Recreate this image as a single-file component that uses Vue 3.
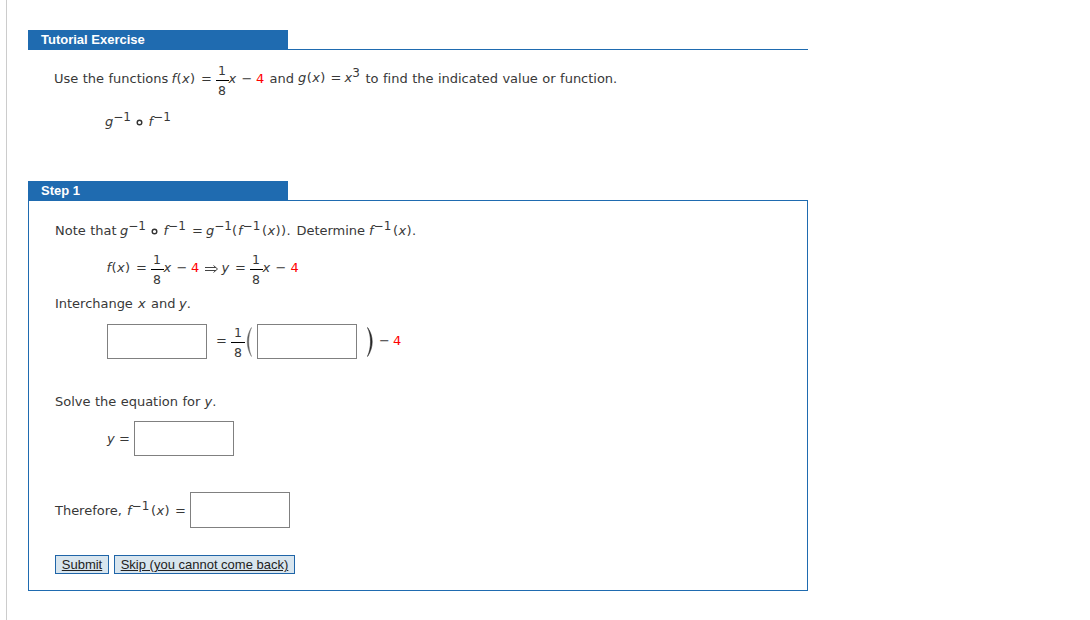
<script setup>
import { h } from 'vue'

const Frac = () => h('span', { class: 'frac' }, [
  h('span', { class: 'num' }, '1'),
  h('span', { class: 'den' }, '8'),
])
const Inv = (props) => h('span', { class: 'inv' }, [h('i', props.name), h('sup', '−1')])
Inv.props = ['name']
const Ring = () => h('svg', { class: 'ring', width: 7, height: 7, viewBox: '0 0 7 7' }, [
  h('circle', { cx: 3.5, cy: 3.5, r: 2.3, fill: 'none', stroke: '#333', 'stroke-width': 1.4 }),
])
</script>

<template>
  <main class="page">
    <section class="exercise">
      <h2 class="tab">Tutorial Exercise</h2>
      <div class="body">
        <div class="row intro">
          <span class="t">Use the functions</span>
          <span class="fn"><i>f</i>(<i>x</i>)</span>
          <span>=</span>
          <Frac />
          <i>x</i>
          <span class="minus">−</span>
          <span class="red">4</span>
          <span>and</span>
          <span class="fn up"><i>g</i>(<i>x</i>)</span>
          <span class="up">=</span>
          <span class="up"><i>x</i><sup class="cube">3</sup></span>
          <span class="t tail">to find the indicated value or function.</span>
        </div>
        <div class="row compose">
          <Inv name="g" />
          <Ring />
          <Inv name="f" class="f" />
        </div>
      </div>
    </section>

    <section class="step">
      <h2 class="tab">Step 1</h2>
      <div class="panel">
        <div class="row note">
          <span class="t">Note that</span>
          <Inv name="g" />
          <Ring />
          <Inv name="f" class="f" />
          <span>=</span>
          <Inv name="g" />
          <span>(</span>
          <Inv name="f" class="f" />
          <span class="fn">(<i>x</i>)).</span>
          <span class="t">Determine</span>
          <Inv name="f" class="f" />
          <span class="fn">(<i>x</i>).</span>
        </div>
        <div class="row equation">
          <span class="fn"><i>f</i>(<i>x</i>)</span>
          <span>=</span>
          <Frac />
          <i>x</i>
          <span class="minus">−</span>
          <span class="red">4</span>
          <svg class="implies" width="14" height="9" viewBox="0 0 14 9"><path d="M0 3.500H11M0 6.500H11M8.500 1.500L12.500 5L8.500 8.500" fill="none" stroke="#444" stroke-width="1" /></svg>
          <i>y</i>
          <span>=</span>
          <Frac />
          <i>x</i>
          <span class="minus">−</span>
          <span class="red">4</span>
        </div>
        <div class="row swap">
          <span class="t">Interchange</span><i>x</i><span>and</span><span><i>y</i>.</span>
        </div>
        <div class="row blanks">
          <input class="blank" type="text" />
          <span>=</span>
          <Frac class="wide" />
          <svg class="paren" width="7" height="30" viewBox="0 0 7 30"><path d="M5.500 .5C-.2 9 -.2 20.500 5.500 29.500C1.800 20.500 1.800 9 5.500 .5Z" fill="#555" stroke="#777" stroke-width=".5" /></svg>
          <input class="blank" type="text" />
          <svg class="paren" width="7" height="30" viewBox="0 0 7 30"><path d="M.5 .5C6.800 9 6.800 20.500 .5 29.500C4.500 20.500 4.500 9 .5 .5Z" fill="#222" stroke="#333" stroke-width=".6" /></svg>
          <span class="minus">−</span>
          <span class="red">4</span>
        </div>
        <div class="row solve">
          <span class="t">Solve the equation for</span><span><i>y</i>.</span>
        </div>
        <div class="row answer">
          <i>y</i><span>=</span><input class="blank" type="text" />
        </div>
        <div class="row result">
          <span class="t">Therefore,</span>
          <Inv name="f" class="f" />
          <span class="fn">(<i>x</i>)</span>
          <span>=</span>
          <input class="blank tall" type="text" />
        </div>
        <div class="actions">
          <button class="submit">Submit</button>
          <button class="skip">Skip (you cannot come back)</button>
        </div>
      </div>
    </section>
  </main>
</template>

<style>
body { background: #fff; }
</style>

<style scoped>
.page {
  box-sizing: border-box;
  height: 620px;
  overflow: hidden;
  margin-left: 6px;
  padding: 30px 0 0 21px;
  border-left: 1px solid #ccc;
  font: 13px/20px Verdana, "DejaVu Sans", sans-serif;
  color: #383838;
}
.exercise { width: 780px; height: 151px; }
.tab {
  box-sizing: border-box;
  width: 260px;
  height: 20px;
  margin: 0;
  padding-left: 13px;
  background: #1f6bb0;
  color: #fff;
  font: bold 13px/20px "Liberation Sans", Arial, sans-serif;
}
.body { margin-top: -1px; border-top: 1px solid #1f6bb0; padding-left: 26px; }
.step { width: 780px; }
.panel {
  box-sizing: border-box;
  height: 391px;
  margin-top: -1px;
  padding-left: 26px;
  border: 1px solid #1f6bb0;
}
.row {
  display: grid;
  grid-template-rows: 36px;
  align-items: center;
  height: 36px;
  white-space: nowrap;
}
.t { letter-spacing: -0.02px; word-spacing: 0.4px; }
.fn { letter-spacing: 0.4px; }
.up { margin-top: -2px; }
.red { color: #f00; }
.page :deep(sup) { font-size: 12px; line-height: 0; vertical-align: 5px; margin-left: 0; }
.page :deep(.frac) {
  display: flex;
  flex-direction: column;
  width: 13px;
  text-align: center;
  font-size: 12.500px;
  line-height: 19px;
  margin-top: 3px;
}
.page :deep(.num) { border-bottom: 1px solid #000; }
.page :deep(.frac.wide) { width: 14px; }
.intro { margin-top: 11px; grid-template-columns: 117.5px 29.500px 14.500px 13px 13px 14.500px 13.500px 28.500px 32.500px 14px 21px 252px; }
.compose { margin: 7px 0 0 51px; grid-template-columns: 31px 12.500px 24px; }
.note { margin-top: 12px; grid-template-columns: 65px 31px 12.500px 28.500px 14px 26px 6px 24px 34.500px 72.500px 24px 30px; }
.equation { margin: 1px 0 0 51.500px; grid-template-columns: 29.500px 14.500px 13px 13px 14.500px 13.500px 17px 13.500px 14.500px 13px 13px 15px 13px; }
.swap { grid-template-columns: 83px 13px 28px 20px; }
.blanks { margin: 1px 0 0 52px; grid-template-columns: 109px 15px 15px 11px 110px 12px 14px 12px; }
.blanks .paren { margin-top: 2px; }
.solve { margin-top: 25px; grid-template-columns: 149.500px 20px; }
.answer { margin: 1px 0 0 52px; grid-template-columns: 12px 15px 100px; }
.answer .blank { margin-top: -2px; }
.result { margin-top: 35px; grid-template-columns: 72px 24px 24px 15px 100px; }
.result > span { margin-top: 1px; }
.blank {
  box-sizing: border-box;
  width: 100px;
  height: 35px;
  margin: 0;
  padding: 2px 6px;
  border: 1px solid #808080;
  background: #fff;
  outline: none;
}
.tall { height: 36px; }
.actions { display: flex; gap: 5px; margin-top: 27px; }
.actions button {
  box-sizing: border-box;
  height: 19px;
  padding: 0;
  border: 1px solid #1f65a8;
  border-radius: 0;
  background: #d8e5ee;
  color: #222;
  font: 13px/17px "Liberation Sans", Arial, sans-serif;
  text-decoration: underline;
}
.actions .submit { width: 54px; }
.actions .skip { width: 181px; }
</style>
